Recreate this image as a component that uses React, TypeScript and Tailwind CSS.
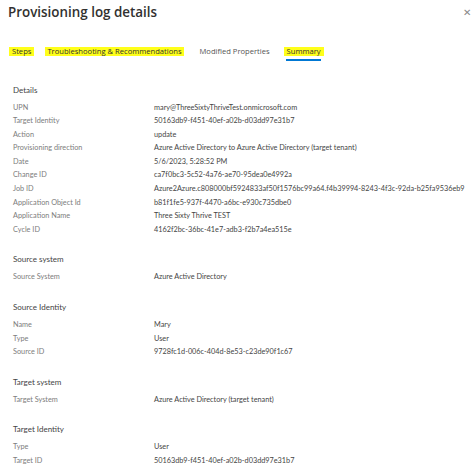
import React from "react";

const sections: { title: string; rows: [string, string][] }[] = [
  {
    title: "Details",
    rows: [
      ["UPN", "mary@ThreeSixtyThriveTest.onmicrosoft.com"],
      ["Target Identity", "50163db9-f451-40ef-a02b-d03dd97e31b7"],
      ["Action", "update"],
      ["Provisioning direction", "Azure Active Directory to Azure Active Directory (target tenant)"],
      ["Date", "5/6/2023, 5:28:52 PM"],
      ["Change ID", "ca7f0bc3-5c52-4a76-ae70-95dea0e4992a"],
      ["Job ID", "Azure2Azure.c808000bf5924833af50f1576bc99a64.f4b39994-8243-4f3c-92da-b25fa9536eb9"],
      ["Application Object Id", "b81f1fe5-937f-4470-a6bc-e930c735dbe0"],
      ["Application Name", "Three Sixty Thrive TEST"],
      ["Cycle ID", "4162f2bc-36bc-41e7-adb3-f2b7a4ea515e"],
    ],
  },
  { title: "Source system", rows: [["Source System", "Azure Active Directory"]] },
  {
    title: "Source Identity",
    rows: [
      ["Name", "Mary"],
      ["Type", "User"],
      ["Source ID", "9728fc1d-006c-404d-8e53-c23de90f1c67"],
    ],
  },
  { title: "Target system", rows: [["Target System", "Azure Active Directory (target tenant)"]] },
  {
    title: "Target Identity",
    rows: [
      ["Type", "User"],
      ["Target ID", "50163db9-f451-40ef-a02b-d03dd97e31b7"],
    ],
  },
];

export default function App() {
  return (
    <div
      className="w-[474px] h-[476px] bg-white overflow-hidden text-[#323130]"
      style={{ fontFamily: '"Open Sans", "Noto Sans", sans-serif' }}
    >
      <div className="flex items-start justify-between pl-[8px] pr-[3px] pt-[1px]">
        <h1 className="text-[13.4px] leading-[22px] font-semibold text-[#323130]">Provisioning log details</h1>
        <span className="text-[10px] leading-[22px] text-[#888]">✕</span>
      </div>
      <div className="flex items-start pl-[9px] mt-[24px] text-[7.6px] leading-[9px] gap-[11px]">
        <span className="bg-[#ffff1a] px-[3px]">Steps</span>
        <span className="bg-[#ffff1a] px-[2px]">Troubleshooting &amp; Recommendations</span>
        <span className="ml-[5px] text-[#555]">Modified Properties</span>
        <div className="ml-[3px] flex flex-col items-center">
          <span className="bg-[#ffff1a] px-[3px]">Summary</span>
          <div className="mt-[3px] h-[1.5px] w-[35px] bg-[#0078d4]" />
        </div>
      </div>
      <div
        className="pl-[13px] pt-[23px] flex flex-col gap-[17px] text-[7.3px]"
        style={{ fontFamily: 'Lato, "Open Sans", sans-serif' }}
      >
        {sections.map((s) => (
          <div key={s.title} className="flex flex-col">
            <div className="text-[8px] leading-[12px] mb-[5px] text-[#444]">{s.title}</div>
            {s.rows.map(([k, v]) => (
              <div key={k} className="flex leading-[13.6px] whitespace-nowrap">
                <div className="w-[141px] shrink-0 text-[#7d7d7d]">{k}</div>
                <div className="text-[#454545]">{v}</div>
              </div>
            ))}
          </div>
        ))}
      </div>
    </div>
  );
}
